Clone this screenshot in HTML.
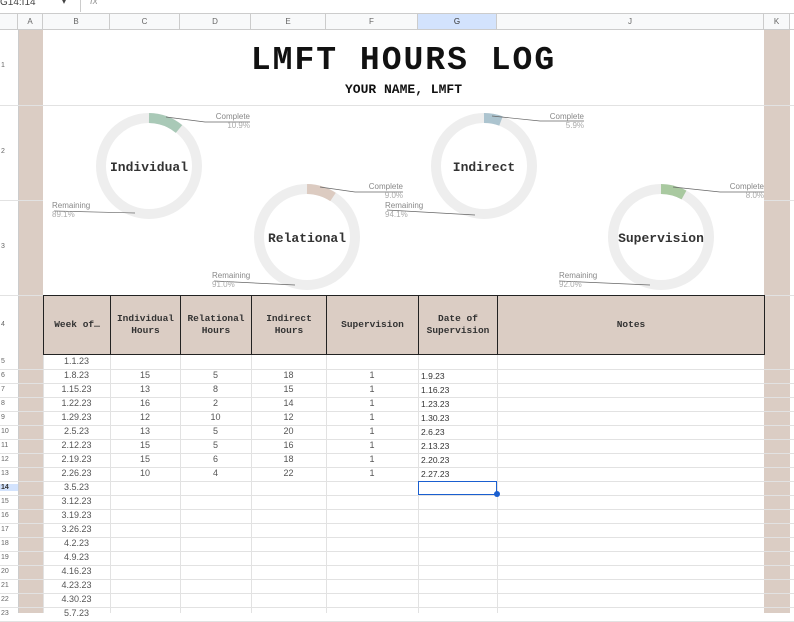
<!DOCTYPE html>
<html><head><meta charset="utf-8"><style>
body{margin:0;width:794px;height:613px;overflow:hidden;background:#fff;font-family:"Liberation Sans",sans-serif;position:relative}
.a{position:absolute}
.hl{position:absolute;height:1px;background:#e2e2e2}
.vl{position:absolute;width:1px;background:#e2e2e2}
.ch{position:absolute;top:14px;height:15px;font-size:8px;color:#666;text-align:center;line-height:15px;border-right:1px solid #ccc;box-sizing:border-box;background:#f8f9fa}
.rn{position:absolute;left:0;width:18px;font-size:7px;color:#666;text-align:left;padding-left:1px;box-sizing:border-box}
.hd{position:absolute;top:295px;height:60px;background:#dbcdc4;border:1px solid #222;box-sizing:border-box;font-family:"Liberation Mono",monospace;font-weight:bold;font-size:9.5px;color:#333;display:flex;align-items:center;justify-content:center;text-align:center;line-height:12px}
.c{position:absolute;font-size:9px;color:#555;text-align:center}
</style></head><body>
<div class="a" style="left:0;top:0;width:794px;height:14px;background:#fff;font-size:10px;color:#444"><span class="a" style="left:0;top:-3px">G14:I14</span><span class="a" style="left:62px;top:-3px;font-size:8px">▾</span><span class="a" style="left:80px;top:0;width:1px;height:12px;background:#ccc"></span><span class="a" style="left:90px;top:-4px;font-style:italic;color:#999">fx</span></div>
<div class="a" style="left:0;top:13px;width:794px;height:1px;background:#ccc"></div>
<div class="ch" style="left:0;width:18px"></div>
<div class="ch" style="left:18px;width:25px">A</div>
<div class="ch" style="left:43px;width:67px">B</div>
<div class="ch" style="left:110px;width:70px">C</div>
<div class="ch" style="left:180px;width:71px">D</div>
<div class="ch" style="left:251px;width:75px">E</div>
<div class="ch" style="left:326px;width:92px">F</div>
<div class="ch" style="left:418px;width:79px;background:#d3e3fd;color:#333">G</div>
<div class="ch" style="left:497px;width:267px">J</div>
<div class="ch" style="left:764px;width:26px">K</div>
<div class="a" style="left:0;top:29px;width:794px;height:1px;background:#ccc"></div>
<div class="a" style="left:18px;top:30px;width:25px;height:583px;background:#dbcdc4"></div>
<div class="a" style="left:764px;top:30px;width:26px;height:583px;background:#dbcdc4"></div>
<div class="vl" style="left:18px;top:29px;height:584px;background:#ccc"></div>
<div class="hl" style="left:0;top:105px;width:794px"></div>
<div class="hl" style="left:0;top:200px;width:794px"></div>
<div class="hl" style="left:0;top:295px;width:794px"></div>
<div class="a" style="left:43px;top:106px;width:721px;height:189px;background:#fff"></div>
<div class="rn" style="top:62px">1</div><div class="rn" style="top:148px">2</div><div class="rn" style="top:243px">3</div><div class="rn" style="top:321px">4</div>
<div class="a" style="left:43px;top:42px;width:721px;text-align:center;font-family:'Liberation Mono',monospace;font-weight:bold;font-size:33px;color:#111;letter-spacing:2px">LMFT HOURS LOG</div>
<div class="a" style="left:43px;top:82px;width:721px;text-align:center;font-family:'Liberation Mono',monospace;font-weight:bold;font-size:13px;color:#111">YOUR NAME, LMFT</div>
<svg class="a" style="left:0;top:0" width="794" height="300" font-family="Liberation Sans" font-size="8" fill="#888">
<g fill="none" stroke="#eeeeee" stroke-width="10">
<circle cx="149" cy="166" r="48"/><circle cx="307" cy="237" r="48"/><circle cx="484" cy="166" r="48"/><circle cx="661" cy="237" r="48"/></g>
<g fill="none" stroke-width="10">
<path d="M149 118 A48 48 0 0 1 179 129" stroke="#a9c9b7"/>
<path d="M307 189 A48 48 0 0 1 333 197" stroke="#dccbc1"/>
<path d="M484 118 A48 48 0 0 1 501 121" stroke="#acc4cf"/>
<path d="M661 189 A48 48 0 0 1 684 195" stroke="#a9c9a0"/></g>
<g stroke="#666" stroke-width="0.7" fill="none">
<path d="M166 117 L205 122 L250 122"/><path d="M54 211 L135 213"/>
<path d="M320 187 L355 192 L403 192"/><path d="M214 281 L295 285"/>
<path d="M492 116 L540 121 L584 121"/><path d="M387 210 L475 215"/>
<path d="M673 187 L720 192 L764 192"/><path d="M559 281 L650 285"/></g>
<text x="250" y="119" text-anchor="end">Complete</text><text x="250" y="128" text-anchor="end" fill="#aaa">10.9%</text>
<text x="52" y="208">Remaining</text><text x="52" y="217" fill="#aaa">89.1%</text>
<text x="403" y="189" text-anchor="end">Complete</text><text x="403" y="198" text-anchor="end" fill="#aaa">9.0%</text>
<text x="212" y="278">Remaining</text><text x="212" y="287" fill="#aaa">91.0%</text>
<text x="584" y="119" text-anchor="end">Complete</text><text x="584" y="128" text-anchor="end" fill="#aaa">5.9%</text>
<text x="385" y="208">Remaining</text><text x="385" y="217" fill="#aaa">94.1%</text>
<text x="764" y="189" text-anchor="end">Complete</text><text x="764" y="198" text-anchor="end" fill="#aaa">8.0%</text>
<text x="559" y="278">Remaining</text><text x="559" y="287" fill="#aaa">92.0%</text>
<g font-family="Liberation Mono" font-weight="bold" font-size="13" fill="#333" text-anchor="middle">
<text x="149" y="171">Individual</text><text x="307" y="242">Relational</text><text x="484" y="171">Indirect</text><text x="661" y="242">Supervision</text></g>
</svg>
<div class="hd" style="left:43px;width:68px">Week of…</div>
<div class="hd" style="left:110px;width:71px">Individual<br>Hours</div>
<div class="hd" style="left:180px;width:72px">Relational<br>Hours</div>
<div class="hd" style="left:251px;width:76px">Indirect<br>Hours</div>
<div class="hd" style="left:326px;width:93px">Supervision</div>
<div class="hd" style="left:418px;width:80px">Date of<br>Supervision</div>
<div class="hd" style="left:497px;width:268px">Notes</div>
<div id="g"></div>
<script>
var weeks=["1.1.23","1.8.23","1.15.23","1.22.23","1.29.23","2.5.23","2.12.23","2.19.23","2.26.23","3.5.23","3.12.23","3.19.23","3.26.23","4.2.23","4.9.23","4.16.23","4.23.23","4.30.23","5.7.23"];
var d=[[],[15,5,18,1,"1.9.23"],[13,8,15,1,"1.16.23"],[16,2,14,1,"1.23.23"],[12,10,12,1,"1.30.23"],[13,5,20,1,"2.6.23"],[15,5,16,1,"2.13.23"],[15,6,18,1,"2.20.23"],[10,4,22,1,"2.27.23"]];
var h="";
var cols=[[110,70],[180,71],[251,75],[326,92]];
[43,110,180,251,326,418,497].forEach(function(x){h+='<div class="vl" style="left:'+x+'px;top:355px;height:258px"></div>'});
for(var i=0;i<19;i++){var t=355+i*14;
h+='<div class="hl" style="left:0;top:'+(t+14)+'px;width:794px"></div>';
h+='<div class="rn" style="top:'+(t+3)+'px;'+(i==9?'background:#d3e3fd;font-weight:bold;color:#333;':'')+'">'+(i+5)+'</div>';
h+='<div class="c" style="left:43px;width:67px;top:'+(t+1)+'px">'+weeks[i]+'</div>';
if(d[i]&&d[i].length){for(var j=0;j<4;j++)h+='<div class="c" style="left:'+cols[j][0]+'px;width:'+cols[j][1]+'px;top:'+(t+1)+'px">'+d[i][j]+'</div>';
h+='<div class="c" style="left:421px;top:'+(t+2)+'px;color:#333;font-size:8.5px">'+d[i][4]+'</div>';}}
h+='<div class="a" style="left:418px;top:481px;width:79px;height:14px;border:1px solid #1a5fd0;box-sizing:border-box"></div><div class="a" style="left:494px;top:491px;width:6px;height:6px;border-radius:50%;background:#1a5fd0"></div>';
document.getElementById("g").innerHTML=h;
</script>
</body></html>
